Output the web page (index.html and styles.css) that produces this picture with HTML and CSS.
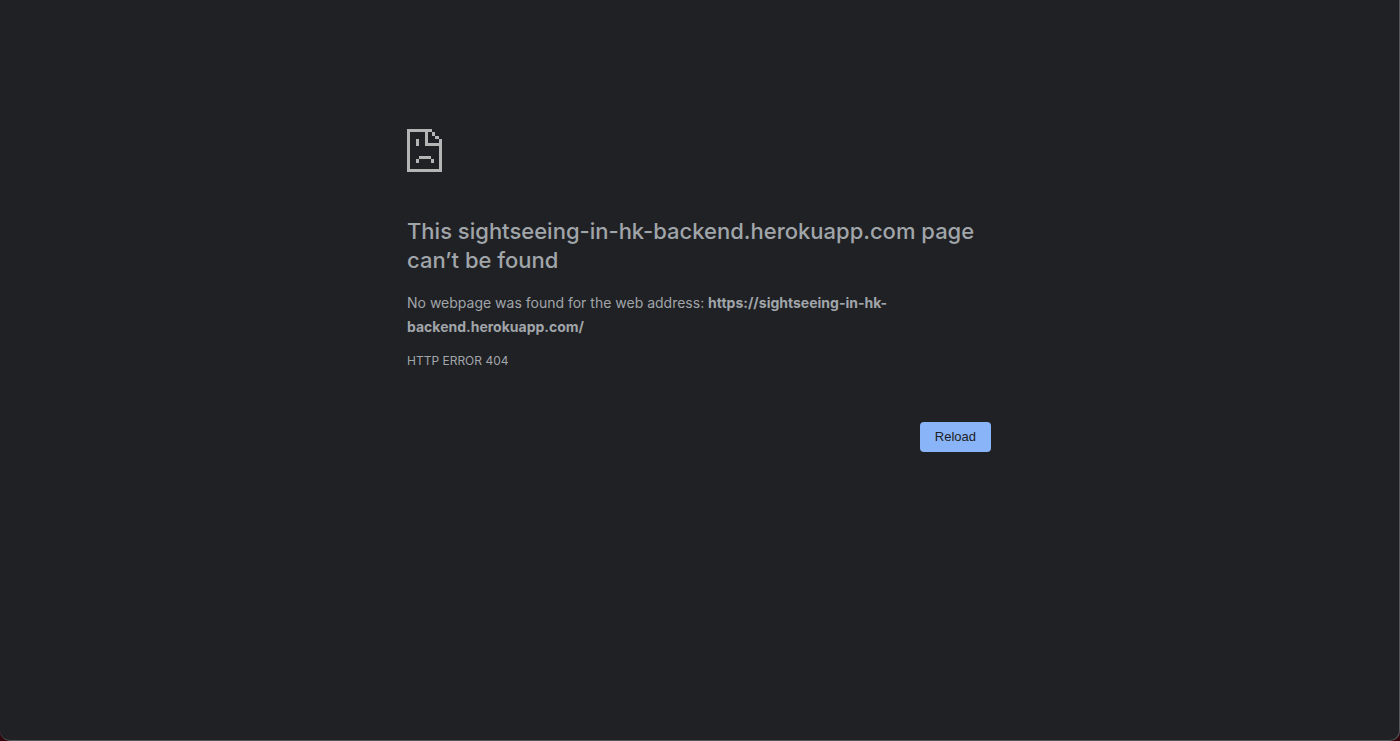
FILE: index.html
```html
<!DOCTYPE html>
<html lang="en">
  <head>
    <meta charset="UTF-8" />
    <meta name="viewport" content="width=device-width,initial-scale=1.0" />
    <title>sightseeing-in-hk-backend.herokuapp.com</title>
    <link rel="stylesheet" href="styles.css">
  </head>
  <body>
    <div class="window">
      <main class="error-page">
        <svg class="error-icon" viewBox="0 0 36 43" shape-rendering="crispEdges" aria-hidden="true">
          <path d="M0 0h25v3H3v37h29V17H18V3h3v11h14v29H0z" />
          <path d="M25 3h3v4h-3zM28 7h4v3h-4zM32 10h3v4h-3z" />
          <path d="M9 10h3v7H9zM12 27h12v3H12zM9 30h3v4H9zM24 30h3v4h-3z" />
        </svg>
        <h1 class="error-title">This sightseeing-in-hk-backend.herokuapp.com page can’t be found</h1>
        <p class="error-text">
          No webpage was found for the web address:
          <strong>https://sightseeing-in-hk-backend.herokuapp.com/</strong>
        </p>
        <div class="error-code">HTTP ERROR 404</div>
        <div class="error-actions">
          <button type="button" class="reload-btn">Reload</button>
        </div>
      </main>
    </div>
  </body>
</html>
```
FILE: styles.css
```css
* {
  box-sizing: border-box;
}
body {
  margin: 0;
  background: #30060c;
  color: #a0a5aa;
  font-family: "Inter", sans-serif;
}
.window {
  min-height: 100vh;
  padding: 129px 25px 24px 24px;
  background: #202124;
  border-right: 1px solid #55575a;
  border-bottom: 1px solid #55575a;
  border-radius: 0 0 10px 10px;
}
.error-page {
  max-width: 584px;
  margin: 0 auto;
}
.error-icon {
  display: block;
  width: 36px;
  height: 43px;
  fill: #b5b5b5;
}
.error-title {
  margin: 45px 0 16px;
  font-size: 22px;
  line-height: 29px;
  font-weight: 500;
}
.error-text {
  margin: 0 0 12px;
  font-size: 14px;
  line-height: 24px;
}
.error-text strong {
  font-weight: 700;
}
.error-code {
  font-size: 12px;
  line-height: 20px;
}
.error-actions {
  display: flex;
  justify-content: flex-end;
  margin-top: 51px;
}
.reload-btn {
  padding: 0 15px;
  border: none;
  border-radius: 4px;
  background: #8ab4f8;
  color: #202124;
  font-family: "Liberation Sans", Arial, sans-serif;
  font-size: 13px;
  line-height: 30px;
  cursor: pointer;
}
.reload-btn:hover {
  background: #aecbfa;
}
```
